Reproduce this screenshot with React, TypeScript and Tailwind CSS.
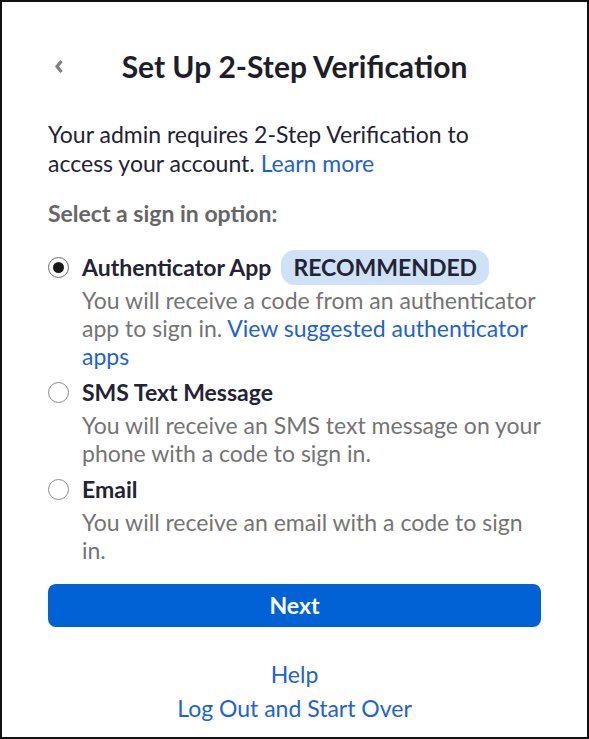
import { useState } from "react";

const options = [
  {
    id: "app",
    label: "Authenticator App",
    recommended: true,
    desc: "You will receive a code from an authenticator app to sign in.",
    link: "View suggested authenticator apps",
  },
  {
    id: "sms",
    label: "SMS Text Message",
    desc: "You will receive an SMS text message on your phone with a code to sign in.",
  },
  {
    id: "email",
    label: "Email",
    desc: "You will receive an email with a code to sign in.",
  },
];

const Radio = ({ checked }: { checked: boolean }) => (
  <span
    className={`flex h-[21px] w-[21px] shrink-0 items-center justify-center rounded-full border-[1.5px] ${
      checked ? "border-[#6b6b6b]" : "border-[#8a8a8a]"
    } bg-white`}
  >
    {checked && <span className="h-[11px] w-[11px] rounded-full bg-[#1a1a1a]" />}
  </span>
);

const App = () => {
  const [selected, setSelected] = useState("app");

  return (
    <div
      className="flex h-[739px] w-[589px] flex-col border-2 border-[#111] bg-white px-[46px] pt-[46px] text-[23px] text-[#232333]"
      style={{ fontFamily: "Lato, 'Open Sans', sans-serif" }}
    >
      <div className="flex h-[36px] items-center">
        <button className="flex w-6 items-center justify-start pl-[6px]">
          <svg width="10" height="15" viewBox="0 0 10 15" fill="none">
            <path d="M7.5 2L3 7.5L7.5 13" stroke="#808080" strokeWidth="3.2" />
          </svg>
        </button>
        <h1 className="flex-1 text-center text-[30px] font-bold leading-[36px] text-[#1e1e28]">
          Set Up 2-Step Verification
        </h1>
        <span className="w-6" />
      </div>

      <p className="mt-[36px] pr-[10px] leading-[29px]">
        Your admin requires 2-Step Verification to access your account.{" "}
        <a className="text-[#1d62d8]">Learn more</a>
      </p>

      <p className="mt-[21px] font-bold leading-[28px] text-[#666]">Select a sign in option:</p>

      <div className="mt-[24px] flex flex-col gap-[6px]">
        {options.map((o) => (
          <label key={o.id} className="flex cursor-pointer flex-col" onClick={() => setSelected(o.id)}>
            <div className="flex h-[33px] items-center">
              <span className="mr-[13px]">
                <Radio checked={selected === o.id} />
              </span>
              <span className="font-bold">{o.label}</span>
              {o.recommended && (
                <span className="ml-[10px] flex h-[35px] items-center rounded-[14px] bg-[#cfe1f7] px-[12px] font-bold">
                  RECOMMENDED
                </span>
              )}
            </div>
            <p className="mt-[2px] pl-[34px] leading-[28px] text-[#747474]">
              {o.desc}
              {o.link && (
                <>
                  {" "}
                  <a className="text-[#1d62d8]">{o.link}</a>
                </>
              )}
            </p>
          </label>
        ))}
      </div>

      <button className="mt-[20px] h-[43px] w-full rounded-[8px] bg-[#0062d4] font-bold text-white">Next</button>

      <div className="mt-[30px] flex flex-col items-center leading-[34px] text-[#1d62d8]">
        <a>Help</a>
        <a>Log Out and Start Over</a>
      </div>
    </div>
  );
};

export default App;
